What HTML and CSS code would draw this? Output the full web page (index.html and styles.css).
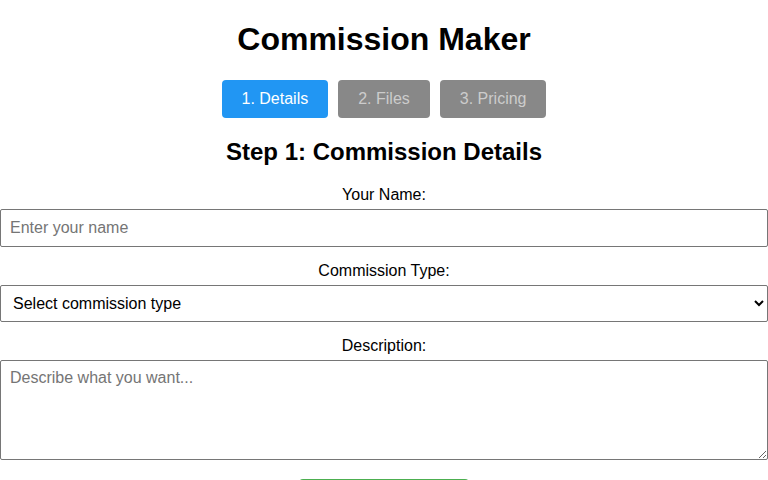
FILE: index.html
```html
<!DOCTYPE html>
<html lang="en">
<head>
<meta charset="utf-8">
<title>Commission Maker</title>
<link rel="stylesheet" href="styles.css">
</head>
<body>
<div class="app">
  <h1 class="title">Commission Maker</h1>
  <div class="steps">
    <button class="step active">1. Details</button>
    <button class="step" disabled>2. Files</button>
    <button class="step" disabled>3. Pricing</button>
  </div>
  <h2 class="subtitle">Step 1: Commission Details</h2>
  <form class="form">
    <label class="label" for="name">Your Name:</label>
    <input class="field" id="name" type="text" placeholder="Enter your name">
    <label class="label" for="type">Commission Type:</label>
    <select class="field select" id="type">
      <option>Select commission type</option>
      <option>Portrait</option>
      <option>Full body</option>
    </select>
    <label class="label" for="desc">Description:</label>
    <textarea class="field area" id="desc" placeholder="Describe what you want..."></textarea>
    <button type="button" class="next">Next: Upload Files</button>
  </form>
</div>
</body>
</html>
```
FILE: styles.css
```css
html, body {
  margin: 0;
  padding: 0;
  background: #fff;
}
body {
  font-family: "Liberation Sans", Arial, sans-serif;
  color: #000;
}
.app {
  text-align: center;
}
.title {
  font-size: 32px;
  font-weight: bold;
  margin: 21px 0 22px;
}
.steps {
  display: flex;
  justify-content: center;
  gap: 10px;
}
.step {
  font-family: "Liberation Sans", Arial, sans-serif;
  font-size: 16px;
  line-height: 18px;
  padding: 10px 20px;
  border: none;
  border-radius: 4px;
  background: #888888;
  color: #cccccc;
}
.step.active {
  background: #2196F3;
  color: #fff;
}
.subtitle {
  font-size: 24px;
  font-weight: bold;
  margin: 20px 0;
}
.form {
  display: flex;
  flex-direction: column;
  align-items: stretch;
}
.label {
  display: block;
  font-size: 16px;
  line-height: 18px;
  margin: 0 0 5px;
}
.field {
  box-sizing: border-box;
  width: 100%;
  margin: 0 0 15px;
  font-family: "Liberation Sans", Arial, sans-serif;
  font-size: 16px;
  border: 1px solid #767676;
  border-radius: 2px;
  background: #fff;
  color: #000;
}
input.field {
  height: 38px;
  padding: 10px 9px;
}
.select {
  height: 37px;
  padding: 0 8px;
}
.area {
  height: 100px;
  padding: 8px 9px;
  resize: vertical;
}
.field::placeholder {
  color: #757575;
}
.next {
  align-self: center;
  margin-top: 4px;
  font-family: "Liberation Sans", Arial, sans-serif;
  font-size: 16px;
  line-height: 18px;
  padding: 10px 20px;
  border: none;
  border-radius: 4px;
  background: #4CAF50;
  color: #fff;
}
```
